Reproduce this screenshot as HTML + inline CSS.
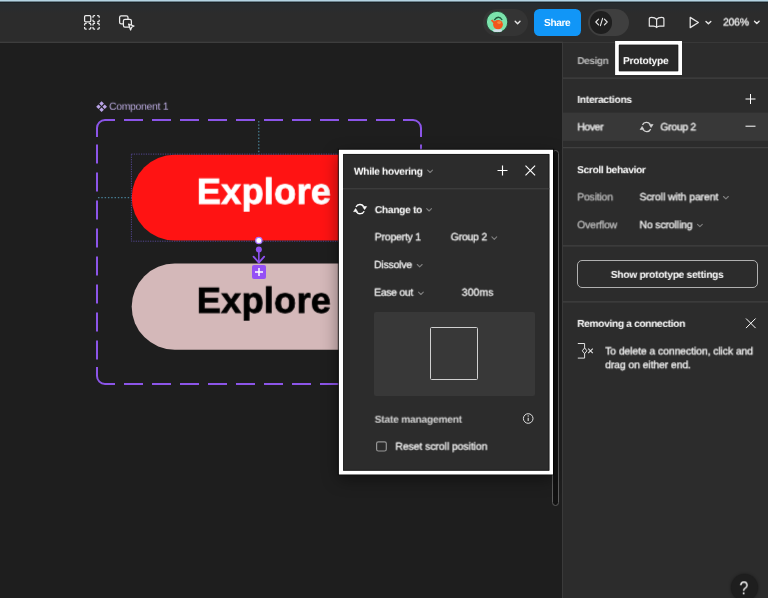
<!DOCTYPE html>
<html lang="en">
<head>
<meta charset="utf-8">
<title>Prototype – While hovering</title>
<style>
*{box-sizing:border-box;margin:0;padding:0}
html,body{width:768px;height:598px;overflow:hidden;background:#1e1e1e}
body{position:relative;font-family:"Liberation Sans",sans-serif;font-size:10px;color:#fff;text-rendering:geometricPrecision}
.abs,svg.abs{position:absolute}
.t{position:absolute;left:0;top:0;white-space:nowrap;display:block;will-change:transform}
#canvas{position:absolute;left:0;top:0;width:768px;height:598px;overflow:hidden}
#toolbar{position:absolute;left:0;top:0;width:768px;height:42px;background:#2c2c2c}
#topline{position:absolute;left:0;top:0;width:768px;height:3px;background:linear-gradient(#b4d4e4 0,#b4d4e4 1px,#6d838e 1.5px,#1a2226 2.2px,#1c2327 3px)}
#panel{position:absolute;left:562px;top:43px;width:206px;height:555px;background:#2c2c2c;border-left:1px solid #3a3a3a}

#modal{position:absolute;left:339px;top:150px;width:214px;height:324px;background:#2c2c2c;box-shadow:0 0 0 1.2px rgba(0,0,0,.75),0 5px 16px rgba(0,0,0,.45)}
</style>
</head>
<body>
<div id="canvas">
  <svg class="abs" style="left:0;top:0" width="768" height="598" viewBox="0 0 768 598" fill="none">
    <rect x="131.7" y="154.8" width="300" height="85.8" rx="42.9" fill="#ff1313"/>
    <rect x="131.7" y="263.6" width="300" height="86.1" rx="43" fill="#d4b8b9"/>
    <!-- component frame -->
    <g stroke="#8c55e8" stroke-width="2" stroke-linecap="butt">
      <path d="M97 137V128A8 8 0 0 1 105 120H115"/>
      <path d="M403 120H413A8 8 0 0 1 421 128V137"/>
      <path d="M97 367V376A8 8 0 0 0 105 384H115"/>
      <path d="M124 120H396" stroke-dasharray="19 9"/>
      <path d="M124 384H396" stroke-dasharray="19 9"/>
      <path d="M97 144.5V360" stroke-dasharray="19 9"/>
      <path d="M421 144.5V360" stroke-dasharray="19 9"/>
    </g>
    <!-- guides -->
    <path d="M258.8 121V154.5" stroke="#4f93ad" stroke-width="1" stroke-dasharray="1.5 1.8"/>
    <path d="M98 197.7H131.5" stroke="#4f93ad" stroke-width="1" stroke-dasharray="1.5 1.8"/>
    <rect x="131.4" y="154.1" width="300" height="87.1" stroke="#5d4fa6" stroke-opacity=".85" stroke-width="1" stroke-dasharray="1.2 1.2"/>
    <!-- connection -->
    <path d="M258.85 249V262" stroke="#8f52f2" stroke-width="1.6"/>
    <path d="M253.5 256.6L258.85 262.6L264.2 256.6" stroke="#8f52f2" stroke-width="1.8" stroke-linecap="round" stroke-linejoin="round"/>
    <circle cx="258.85" cy="249.4" r="3" fill="#8f52f2"/>
    <circle cx="258.85" cy="240.5" r="3.15" fill="#fff" stroke="#a673ff" stroke-width="1.3"/>
    <rect x="252" y="265" width="14" height="14" rx="2" fill="#9450f5"/>
    <path d="M259 268V276M255 272H263" stroke="#fff" stroke-width="1.5"/>
    <!-- component label icon -->
    <g fill="#b9a3e6">
      <path d="M101.6 101.3l2.3 2.3-2.3 2.3-2.3-2.3zM98.5 104.4l2.3 2.3-2.3 2.3-2.3-2.3zM104.7 104.4l2.3 2.3-2.3 2.3-2.3-2.3zM101.6 107.5l2.3 2.3-2.3 2.3-2.3-2.3z"/>
    </g>
  </svg>
<span class="t" style="transform:translate(109.13px,99.75px) rotate(.001deg);font-size:10.4px;line-height:15px;font-weight:normal;color:#b3a4d6;letter-spacing:-0.283px;">Component 1</span>
<span class="t" style="transform:translate(196.80px,165.71px) rotate(.001deg);font-size:36.2px;line-height:51px;font-weight:bold;color:#ffffff;letter-spacing:0.235px;-webkit-text-stroke:0.8px #ffffff;">Explore</span>
<span class="t" style="transform:translate(196.80px,274.71px) rotate(.001deg);font-size:36.2px;line-height:51px;font-weight:bold;color:#000000;letter-spacing:0.235px;-webkit-text-stroke:0.8px #000000;">Explore</span>
</div>

<!-- scrollbar -->
<div class="abs" style="left:552px;top:150px;width:7px;height:356px;border:1px solid #5c5c5c;border-radius:3.5px;background:#121212"></div>

<div id="modal"></div>
<svg class="abs" style="left:0;top:0" width="768" height="598" viewBox="0 0 768 598">
  <path fill="#fff" fill-rule="evenodd" d="M338.9 149.8H553V474.6H338.9ZM343.1 154H549.4V470.7H343.1Z"/>
  <path fill="none" stroke="#111" stroke-opacity=".7" stroke-width=".8" d="M343.5 154.4H549V470.3H343.5Z"/>
</svg>
<div class="abs" style="left:374px;top:312px;width:161px;height:84px;background:#383838;border-radius:2px"></div>
<div class="abs" style="left:430px;top:327px;width:48px;height:53px;border:1px solid #d0d0d0;border-radius:1.5px"></div>
<svg class="abs" style="left:0;top:0" width="768" height="598" viewBox="0 0 768 598" fill="none">
  <path d="M343 188.8H549.5" stroke="#444" stroke-width="1"/>
  <!-- modal icons -->
  <g stroke="#fff" stroke-width="1.15">
    <path d="M502.5 165.5V175.5M497.5 170.5H507.5"/>
    <path d="M525.5 165.7L535.1 175.3M535.1 165.7L525.5 175.3"/>
  </g>
  <g stroke="#7d7d7d" stroke-width="1.15" stroke-linecap="round" stroke-linejoin="round">
    <path d="M427.7 170.1L430.1 172.5L432.5 170.1"/>
    <path d="M426.7 208.6L429.1 211.0L431.5 208.6"/>
    <path d="M491.9 236.9L494.3 239.3L496.7 236.9"/>
    <path d="M417.3 264.5L419.7 266.9L422.1 264.5"/>
    <path d="M418.5 292.1L420.9 294.5L423.3 292.1"/>
  </g>
  <!-- swap icon modal -->
  <g transform="translate(360.1 209.1)" stroke="#fff" stroke-width="1.35" stroke-linecap="butt" stroke-linejoin="round">
    <path d="M-4.1 -2.1A4.5 4.5 0 0 1 3.6 -2.7"/>
    <path d="M4.1 2.1A4.5 4.5 0 0 1 -3.6 2.7"/>
    <path d="M2.6 -2.6L6.5 -2.5L4.5 0.5Z" fill="#fff" stroke-width=".6"/>
    <path d="M-2.6 2.6L-6.5 2.5L-4.5 -0.5Z" fill="#fff" stroke-width=".6"/>
  </g>
  <rect x="376.6" y="441.8" width="9.7" height="9.2" rx="1.8" stroke="#959595" stroke-width="1.2"/>
  <!-- info icon -->
  <circle cx="528.2" cy="418.5" r="4.8" stroke="#e0e0e0" stroke-width="1"/>
  <path d="M528.2 417.8V421" stroke="#e0e0e0" stroke-width="1.1"/>
  <circle cx="528.2" cy="416" r=".7" fill="#e0e0e0"/>
</svg>
<span class="t" style="transform:translate(353.90px,165.70px) rotate(.001deg);font-size:10.2px;line-height:14px;font-weight:bold;color:#ffffff;letter-spacing:-0.314px;">While hovering</span>
<span class="t" style="transform:translate(374.80px,204.20px) rotate(.001deg);font-size:10.2px;line-height:14px;font-weight:bold;color:#ffffff;letter-spacing:-0.280px;">Change to</span>
<span class="t" style="transform:translate(374.74px,230.35px) rotate(.001deg);font-size:10.4px;line-height:15px;font-weight:normal;color:#f2f2f2;letter-spacing:-0.174px;-webkit-text-stroke:0.28px #f2f2f2;">Property 1</span>
<span class="t" style="transform:translate(450.72px,230.31px) rotate(.001deg);font-size:10.4px;line-height:15px;font-weight:normal;color:#f2f2f2;letter-spacing:-0.182px;-webkit-text-stroke:0.28px #f2f2f2;">Group 2</span>
<span class="t" style="transform:translate(374.23px,258.14px) rotate(.001deg);font-size:10.4px;line-height:15px;font-weight:normal;color:#f2f2f2;letter-spacing:-0.174px;-webkit-text-stroke:0.28px #f2f2f2;">Dissolve</span>
<span class="t" style="transform:translate(374.24px,285.74px) rotate(.001deg);font-size:10.4px;line-height:15px;font-weight:normal;color:#f2f2f2;letter-spacing:-0.268px;-webkit-text-stroke:0.28px #f2f2f2;">Ease out</span>
<span class="t" style="transform:translate(461.71px,285.74px) rotate(.001deg);font-size:10.4px;line-height:15px;font-weight:normal;color:#f2f2f2;letter-spacing:0.141px;-webkit-text-stroke:0.28px #f2f2f2;">300ms</span>
<span class="t" style="transform:translate(374.66px,413.70px) rotate(.001deg);font-size:10.2px;line-height:14px;font-weight:bold;color:#d2d2d2;letter-spacing:-0.213px;">State management</span>
<span class="t" style="transform:translate(395.44px,439.75px) rotate(.001deg);font-size:10.4px;line-height:15px;font-weight:normal;color:#f2f2f2;letter-spacing:-0.049px;-webkit-text-stroke:0.28px #f2f2f2;">Reset scroll position</span>

<div id="toolbar"></div>
<div id="topline"></div>
<div class="abs" style="left:0;top:3px;width:768px;height:10px;background:linear-gradient(rgba(36,44,50,.55),rgba(36,44,50,.35) 60%,rgba(44,44,44,0))"></div>
<div id="panel"></div>
<svg class="abs" style="left:0;top:0" width="768" height="598" viewBox="0 0 768 598"><rect x="563" y="112.6" width="205" height="28.3" fill="#383838"/></svg>
<svg class="abs" style="left:0;top:0" width="768" height="598" viewBox="0 0 768 598" fill="none">
  <path d="M0 42.3H563" stroke="#454545" stroke-width="1"/>
  <path d="M563 42.6H768" stroke="#3c3c3c" stroke-width="1"/>
  <g stroke="#404040" stroke-width="1.1">
    <path d="M563 78.1H768"/>
    <path d="M563 147.6H768"/>
    <path d="M563 245.9H768"/>
    <path d="M563 301.9H768"/>
  </g>
  <path fill="#282828" d="M616 42H681V74H616Z"/>
  <path fill="#fff" fill-rule="evenodd" d="M615.1 40.9H682V75.1H615.1ZM618.9 44.7H678.2V71.2H618.9Z"/>
  <path fill="none" stroke="#111" stroke-opacity=".6" stroke-width=".7" d="M619.2 45H677.9V70.9H619.2Z"/>
</svg>
<!-- prototype highlight -->

<!-- show prototype settings button -->
<div class="abs" style="left:577px;top:260px;width:181px;height:28px;border:1px solid #b0b0b0;border-radius:5px"></div>
<!-- avatar pill -->
<div class="abs" style="left:482.5px;top:8.5px;width:45.5px;height:27.5px;border-radius:13.75px;background:#343434"></div>
<svg class="abs" style="left:485px;top:10px" width="24" height="24" viewBox="485 10 24 24">
  <circle cx="497.1" cy="22" r="10.7" fill="#7be3ac" stroke="#1f3a2d" stroke-width=".9"/>
  <ellipse cx="497.6" cy="30.4" rx="4.6" ry="1.5" fill="#cfdde6"/>
  <path d="M494.2 20.2Q498.4 14.4 502.2 20" stroke="#1f5a3c" stroke-width="1.3" fill="none"/>
  <path d="M493.6 23.4L490.8 20.4L492.4 19.6L495 22z" fill="#ee5a22"/>
  <ellipse cx="498" cy="24.6" rx="4.9" ry="4.7" fill="#f2561c"/>
  <ellipse cx="499.2" cy="22.6" rx="2" ry="1.4" fill="#f7a04a" opacity=".7"/>
</svg>
<!-- share -->
<div class="abs" style="left:534px;top:8.5px;width:46.5px;height:27.5px;border-radius:5.5px;background:#1196f7"></div>
<!-- dev toggle -->
<div class="abs" style="left:588px;top:9px;width:41px;height:27px;border-radius:13.5px;background:#3f3f3f"></div>
<div class="abs" style="left:590px;top:11px;width:22px;height:23px;border-radius:11px;background:#1e1e1e"></div>
<svg class="abs" style="left:0;top:0" width="768" height="598" viewBox="0 0 768 598" fill="none">
  <!-- toolbar icon 1 -->
  <g stroke="#ececec" stroke-width="1.25" stroke-linecap="butt">
    <rect x="84.6" y="15.7" width="6.2" height="6.2" rx="1.1"/>
    <path d="M93.00 17.80V16.80Q93.00 15.70 94.10 15.70H95.10M97.10 15.70H98.10Q99.20 15.70 99.20 16.80V17.80M99.20 19.80V20.80Q99.20 21.90 98.10 21.90H97.10M95.10 21.90H94.10Q93.00 21.90 93.00 20.80V19.80"/>
    <path d="M84.60 25.50V24.50Q84.60 23.40 85.70 23.40H86.70M88.70 23.40H89.70Q90.80 23.40 90.80 24.50V25.50M90.80 27.10V28.10Q90.80 29.20 89.70 29.20H88.70M86.70 29.20H85.70Q84.60 29.20 84.60 28.10V27.10"/>
    <path d="M93.00 25.50V24.50Q93.00 23.40 94.10 23.40H95.10M97.10 23.40H98.10Q99.20 23.40 99.20 24.50V25.50M99.20 27.10V28.10Q99.20 29.20 98.10 29.20H97.10M95.10 29.20H94.10Q93.00 29.20 93.00 28.10V27.10"/>
  </g>
  <!-- toolbar icon 2 -->
  <g stroke="#ececec" stroke-width="1.25" stroke-linejoin="round">
    <rect x="119.6" y="15.8" width="8.4" height="8" rx="1.6"/>
    <rect x="123.4" y="19.4" width="8" height="7.8" rx="1.6" fill="#2c2c2c"/>
    <path d="M128.6 24.2L134 26L131.6 27.2L130.6 30z" fill="#2c2c2c"/>
  </g>
  <!-- chevrons toolbar -->
  <g stroke="#e6e6e6" stroke-width="1.1" stroke-linecap="round" stroke-linejoin="round">
    <path d="M515.2 21.3L517.6 23.7L520 21.3" stroke-width="1.4"/>
    <path d="M706 21.4L708.4 23.8L710.8 21.4" stroke-width="1.4"/>
    <path d="M754.5 21.3L756.8 23.6L759.1 21.3" stroke-width="1.4"/>
  </g>
  <!-- dev icon -->
  <g stroke="#e6e6e6" stroke-width="1.1" stroke-linecap="round" stroke-linejoin="round">
    <path d="M598.6 19.2L595.8 22L598.6 24.8"/>
    <path d="M604.4 19.2L607.2 22L604.4 24.8"/>
    <path d="M602.6 18.4L600.4 25.6"/>
  </g>
  <!-- book -->
  <g stroke="#e6e6e6" stroke-width="1.2" stroke-linejoin="round">
    <path d="M656.6 19.4C655.6 18 653.6 17.3 651.6 17.3C650.2 17.3 649.3 17.9 649.3 19V26.2H653.4C654.8 26.2 656 26.7 656.6 27.5C657.2 26.7 658.4 26.2 659.8 26.2H663.9V19C663.9 17.9 663 17.3 661.6 17.3C659.6 17.3 657.6 18 656.6 19.4Z"/>
    <path d="M656.6 19.4V27.5"/>
  </g>
  <!-- play -->
  <path d="M690.2 17.4L698.4 22.5L690.2 27.6Z" stroke="#e6e6e6" stroke-width="1.25" stroke-linejoin="round"/>
  <!-- panel icons -->
  <g stroke="#fff" stroke-width="1">
    <path d="M750.5 94V104M745.5 99H755.5"/>
    <path d="M745.5 126.2H755.5"/>
    <path d="M746 318.5L755.6 328.1M755.6 318.5L746 328.1"/>
  </g>
  <g transform="translate(646.6 127)" stroke="#d4d4d4" stroke-width="1.25" stroke-linecap="butt" stroke-linejoin="round">
    <path d="M-4.1 -2.1A4.5 4.5 0 0 1 3.6 -2.7"/>
    <path d="M4.1 2.1A4.5 4.5 0 0 1 -3.6 2.7"/>
    <path d="M2.6 -2.6L6.5 -2.5L4.5 0.5Z" fill="#d4d4d4" stroke-width=".6"/>
    <path d="M-2.6 2.6L-6.5 2.5L-4.5 -0.5Z" fill="#d4d4d4" stroke-width=".6"/>
  </g>
  <g stroke="#7d7d7d" stroke-width="1.15" stroke-linecap="round" stroke-linejoin="round">
    <path d="M723.5 196.5L725.9 198.9L728.3 196.5"/>
    <path d="M697.5 224.3L699.9 226.7L702.3 224.3"/>
  </g>
  <!-- removing connection icon -->
  <g stroke="#e0e0e0" stroke-width="1">
    <path d="M577.8 343.5H584.6V348.2M584.6 353.4V358.1H577.8"/>
    <path d="M584.6 347.9L586.9 350.8L584.6 353.7L582.3 350.8Z"/>
    <path d="M588.2 348.6L592.8 353.2M592.8 348.6L588.2 353.2" stroke-width="1.1"/>
  </g>
</svg>
<span class="t" style="transform:translate(577.37px,55.10px) rotate(.001deg);font-size:10.2px;line-height:14px;font-weight:bold;color:#b8b8b8;letter-spacing:-0.500px;">Design</span>
<span class="t" style="transform:translate(623.07px,55.11px) rotate(.001deg);font-size:10.2px;line-height:14px;font-weight:bold;color:#ffffff;letter-spacing:-0.237px;">Prototype</span>
<span class="t" style="transform:translate(577.37px,93.91px) rotate(.001deg);font-size:10.2px;line-height:14px;font-weight:bold;color:#ffffff;letter-spacing:-0.272px;">Interactions</span>
<span class="t" style="transform:translate(577.44px,120.40px) rotate(.001deg);font-size:10.4px;line-height:15px;font-weight:normal;color:#f2f2f2;letter-spacing:-0.392px;-webkit-text-stroke:0.28px #f2f2f2;">Hover</span>
<span class="t" style="transform:translate(660.42px,120.36px) rotate(.001deg);font-size:10.4px;line-height:15px;font-weight:normal;color:#f2f2f2;letter-spacing:-0.285px;-webkit-text-stroke:0.28px #f2f2f2;">Group 2</span>
<span class="t" style="transform:translate(577.16px,164.20px) rotate(.001deg);font-size:10.2px;line-height:14px;font-weight:bold;color:#ffffff;letter-spacing:-0.344px;">Scroll behavior</span>
<span class="t" style="transform:translate(577.34px,190.40px) rotate(.001deg);font-size:10.4px;line-height:15px;font-weight:normal;color:#bcbcbc;letter-spacing:-0.175px;-webkit-text-stroke:0.28px #bcbcbc;">Position</span>
<span class="t" style="transform:translate(577.26px,218.30px) rotate(.001deg);font-size:10.4px;line-height:15px;font-weight:normal;color:#bcbcbc;letter-spacing:-0.135px;-webkit-text-stroke:0.28px #bcbcbc;">Overflow</span>
<span class="t" style="transform:translate(639.52px,190.33px) rotate(.001deg);font-size:10.4px;line-height:15px;font-weight:normal;color:#f2f2f2;letter-spacing:-0.048px;-webkit-text-stroke:0.28px #f2f2f2;">Scroll with parent</span>
<span class="t" style="transform:translate(639.54px,218.24px) rotate(.001deg);font-size:10.4px;line-height:15px;font-weight:normal;color:#f2f2f2;letter-spacing:-0.112px;-webkit-text-stroke:0.28px #f2f2f2;">No scrolling</span>
<span class="t" style="transform:translate(610.76px,268.90px) rotate(.001deg);font-size:10.2px;line-height:14px;font-weight:bold;color:#ffffff;letter-spacing:-0.267px;">Show prototype settings</span>
<span class="t" style="transform:translate(577.27px,317.91px) rotate(.001deg);font-size:10.2px;line-height:14px;font-weight:bold;color:#ffffff;letter-spacing:-0.336px;">Removing a connection</span>
<span class="t" style="transform:translate(605.25px,344.52px) rotate(.001deg);font-size:10.4px;line-height:15px;font-weight:normal;color:#f2f2f2;letter-spacing:-0.073px;-webkit-text-stroke:0.28px #f2f2f2;">To delete a connection, click and</span>
<span class="t" style="transform:translate(605.25px,358.24px) rotate(.001deg);font-size:10.4px;line-height:15px;font-weight:normal;color:#f2f2f2;letter-spacing:-0.082px;-webkit-text-stroke:0.28px #f2f2f2;">drag on either end.</span>
<span class="t" style="transform:translate(723.12px,15.54px) rotate(.001deg);font-size:10.4px;line-height:15px;font-weight:normal;color:#f2f2f2;letter-spacing:-0.222px;-webkit-text-stroke:0.28px #f2f2f2;">206%</span>
<span class="t" style="transform:translate(543.96px,17.00px) rotate(.001deg);font-size:10.2px;line-height:14px;font-weight:bold;color:#ffffff;letter-spacing:-0.402px;">Share</span>
<!-- help -->
<div class="abs" style="left:730.5px;top:573.5px;width:27.5px;height:27.5px;border-radius:14px;background:#1e1e1e;box-shadow:0 0 3px rgba(0,0,0,.5)"></div>
<span class="t" style="transform-origin:0 0;transform:translate(739.3px,576.3px) scale(.88,1);font-size:18.5px;line-height:24px;color:#f0f0f0">?</span>
</body>
</html>
